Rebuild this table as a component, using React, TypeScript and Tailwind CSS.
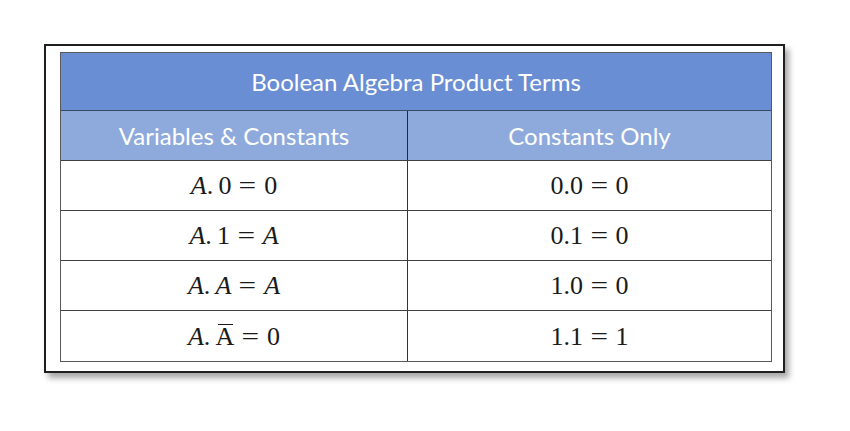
const Eq = () => <span className="mx-[9px] inline-block scale-x-[1.2]">=</span>;

const rows: { left: React.ReactNode; right: string; result: string }[] = [
  {
    left: (
      <>
        <i>A</i>.&#8201;0<Eq />0
      </>
    ),
    right: "0.0",
    result: "0",
  },
  {
    left: (
      <>
        <i>A</i>.&#8201;1<Eq />
        <i>A</i>
      </>
    ),
    right: "0.1",
    result: "0",
  },
  {
    left: (
      <>
        <i>A</i>.&#8201;<i>A</i>
        <Eq />
        <i>A</i>
      </>
    ),
    right: "1.0",
    result: "0",
  },
  {
    left: (
      <>
        <i>A</i>.&#8201;
        <span className="relative">
          A<span className="absolute left-[2px] right-[1px] top-[2px] h-[1.5px] bg-[#1a1a1a]" />
        </span>
        <Eq />0
      </>
    ),
    right: "1.1",
    result: "1",
  },
];

export default function App() {
  return (
    <div className="min-h-screen bg-white pt-[44px] pl-[44px]">
      <div className="w-[741px] h-[329px] border-2 border-[#1f1f1f] bg-white pt-[6px] pl-[14px] shadow-[4px_5px_6px_rgba(0,0,0,0.35)]">
        <div className="w-[712px] border border-[#595959]">
          <div className="h-[58px] flex items-center justify-center bg-[#6a8ed3] border-b border-[#3b4a63] text-white text-[24px] font-['Lato',sans-serif]">
            Boolean Algebra Product Terms
          </div>
          <div className="grid grid-cols-[347px_1fr] h-[50px] bg-[#8eaadc] text-white text-[24px] font-['Lato',sans-serif] border-b border-[#404040]">
            <div className="flex items-center justify-center border-r border-[#1f2a3c]">Variables &amp; Constants</div>
            <div className="flex items-center justify-center">Constants Only</div>
          </div>
          {rows.map((r, i) => (
            <div
              key={i}
              className={`grid grid-cols-[347px_1fr] h-[50px] text-[26px] text-[#1a1a1a] font-['Liberation_Serif',serif] ${
                i < rows.length - 1 ? "border-b border-[#404040]" : ""
              }`}
            >
              <div className="flex items-center justify-center border-r border-[#333]">
                <span>{r.left}</span>
              </div>
              <div className="flex items-center justify-center">
                <span>
                  {r.right}
                  <Eq />
                  {r.result}
                </span>
              </div>
            </div>
          ))}
        </div>
      </div>
    </div>
  );
}
